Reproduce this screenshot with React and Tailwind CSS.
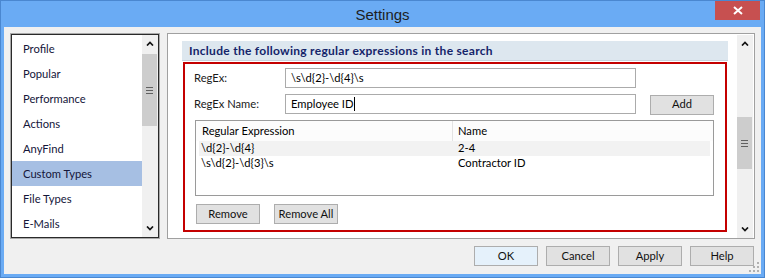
import React from 'react';

const items = ['Profile', 'Popular', 'Performance', 'Actions', 'AnyFind', 'Custom Types', 'File Types', 'E-Mails'];

function Chevron({ up }) {
  return (
    <svg width="8" height="5" viewBox="0 0 8 5">
      <polyline points={up ? '1,4.5 4,1.5 7,4.5' : '1,0.5 4,3.5 7,0.5'} fill="none" stroke="#111" strokeWidth="1.7" />
    </svg>
  );
}

function ScrollBar({ thumbTop, thumbClass }) {
  return (
    <div className="w-[16px] h-full bg-[#f0f0f0] flex flex-col">
      <div className="h-[17px] flex items-center justify-center">
        <Chevron up />
      </div>
      <div className="flex-1 relative">
        <div className={`absolute left-0 right-[1px] bg-[#cdcdcd] flex items-center justify-center ${thumbTop} ${thumbClass}`}>
          <div className="flex flex-col gap-[2px]">
            <div className="w-[7px] h-px bg-[#606060]" />
            <div className="w-[7px] h-px bg-[#606060]" />
            <div className="w-[7px] h-px bg-[#606060]" />
          </div>
        </div>
      </div>
      <div className="h-[17px] flex items-center justify-center">
        <Chevron />
      </div>
    </div>
  );
}

function Btn({ children, className = '' }) {
  return (
    <div className={`h-[20px] w-[64px] flex items-center justify-center border border-[#adadad] bg-[#e1e1e1] text-[#111] ${className}`}>
      {children}
    </div>
  );
}

export default function App() {
  return (
    <div className="w-[765px] h-[278px] bg-[#6aabf4] border border-[#4a87d0] flex flex-col font-['Lato',sans-serif] text-[11.2px] text-[#1a1a1a] overflow-hidden">
      <div className="relative h-[26px] flex items-center justify-center pt-[3px]">
        <span className="text-[15px] text-[#1e1e1e] font-['Liberation_Sans',sans-serif]">Settings</span>
        <div className="absolute top-[-1px] right-[4px] w-[45px] h-[20px] bg-[#c75050] flex items-center justify-center">
          <svg width="10" height="9" viewBox="0 0 10 9">
            <path d="M1 1 L9 8 M9 1 L1 8" stroke="#fff" strokeWidth="2" />
          </svg>
        </div>
      </div>

      <div className="relative mx-[3px] mb-[3px] flex-1 bg-[#f0f0f0] flex flex-col px-[6px] pt-[6px]">
        <div className="flex gap-[7px] h-[206px]">
          {/* left list */}
          <div className="w-[150px] h-[206px] border border-[#a9a9a9]">
            <div className="h-full border border-[#2a2a2a] bg-white flex">
              <div className="flex-1 pt-[1px]">
                {items.map((it) => (
                  <div
                    key={it}
                    className={`h-[25px] flex items-center pl-[11px] pt-[1px] text-[#14163a] ${it === 'Custom Types' ? 'bg-[#a6bfe3]' : ''}`}
                  >
                    {it}
                  </div>
                ))}
              </div>
              <ScrollBar thumbTop="top-[2px]" thumbClass="h-[72px]" />
            </div>
          </div>

          {/* right panel */}
          <div className="w-[588px] h-[206px] border border-[#a0a0a0] bg-white flex pr-[1px] pt-px">
            <div className="flex-1 pl-[14px] pr-[9px] pt-[6px]">
              <div className="h-[20px] bg-[#dde7ef] border-b border-[#c8d2dc] flex items-center pl-[7px] font-bold text-[12px] tracking-[0.28px] text-[#14246a]">
                Include the following regular expressions in the search
              </div>
              <div className="mt-[1px] ml-[1px] w-[544px] h-[170px] border-2 border-[#c40000] flex flex-col pl-[9px] pt-[4px]">
                <div className="flex items-center h-[20px]">
                  <div className="w-[91px]">RegEx:</div>
                  <div className="w-[351px] h-[20px] border border-[#ababab] flex items-center pl-[5px] text-black">{'\\s\\d{2}-\\d{4}\\s'}</div>
                </div>
                <div className="flex items-center h-[20px] mt-[6px]">
                  <div className="w-[91px]">RegEx Name:</div>
                  <div className="w-[351px] h-[20px] border border-[#ababab] flex items-center pl-[5px] text-black">
                    Employee ID<span className="inline-block w-px h-[14px] bg-black" />
                  </div>
                  <Btn className="ml-[14px] h-[19px] mt-[1px]">Add</Btn>
                </div>
                <div className="ml-px mt-[6px] w-[519px] h-[76px] border border-[#9a9a9a] text-black">
                  <div className="h-[20px] flex items-center bg-[#fcfcfc]">
                    <div className="w-[257px] h-full flex items-center pl-[6px] border-r border-[#e3e3e3]">Regular Expression</div>
                    <div className="flex-1 pl-[5px]">Name</div>
                  </div>
                  <div className="mx-[3px] flex flex-col">
                    <div className="h-[15px] bg-[#f2f2f2] flex items-center">
                      <div className="w-[254px] pl-[2px]">{'\\d{2}-\\d{4}'}</div>
                      <div className="pl-[5px]">2-4</div>
                    </div>
                    <div className="h-[15px] flex items-center">
                      <div className="w-[254px] pl-[2px]">{'\\s\\d{2}-\\d{3}\\s'}</div>
                      <div className="pl-[5px]">Contractor ID</div>
                    </div>
                  </div>
                </div>
                <div className="flex gap-[14px] mt-[8px] ml-[2px]">
                  <Btn className="h-[19px]">Remove</Btn>
                  <Btn className="h-[19px]">Remove All</Btn>
                </div>
              </div>
            </div>
            <ScrollBar thumbTop="top-[65px]" thumbClass="h-[52px]" />
          </div>
        </div>

        <div className="flex justify-end gap-[8px] mt-[7px] pr-[1px]">
          <Btn className="bg-[#e5f1fb] border-[#7eb4ea]">OK</Btn>
          <Btn>Cancel</Btn>
          <Btn>Apply</Btn>
          <Btn>Help</Btn>
        </div>

        <div className="absolute right-[1px] bottom-[1px] w-[12px] h-[12px]">
          <div className="absolute right-[1px] top-[1px] w-[2px] h-[2px] bg-[#b0b0b0]" />
          <div className="absolute right-[1px] top-[5px] w-[2px] h-[2px] bg-[#b0b0b0]" />
          <div className="absolute right-[5px] top-[5px] w-[2px] h-[2px] bg-[#b0b0b0]" />
          <div className="absolute right-[1px] top-[9px] w-[2px] h-[2px] bg-[#b0b0b0]" />
          <div className="absolute right-[5px] top-[9px] w-[2px] h-[2px] bg-[#b0b0b0]" />
          <div className="absolute right-[9px] top-[9px] w-[2px] h-[2px] bg-[#b0b0b0]" />
        </div>
      </div>
    </div>
  );
}
